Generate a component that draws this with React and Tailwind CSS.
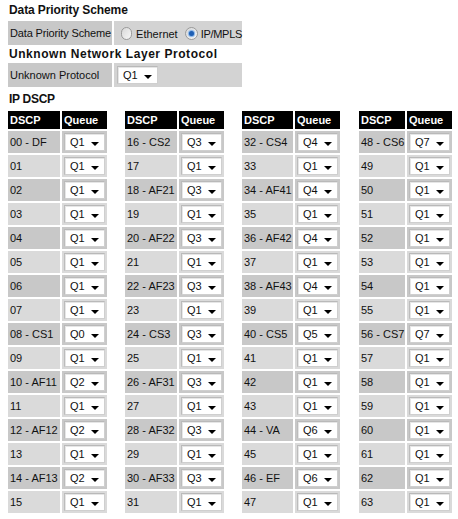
import React from 'react';

const tag = {
  0: 'DF', 8: 'CS1', 10: 'AF11', 12: 'AF12', 14: 'AF13',
  16: 'CS2', 18: 'AF21', 20: 'AF22', 22: 'AF23', 24: 'CS3', 26: 'AF31', 28: 'AF32', 30: 'AF33',
  32: 'CS4', 34: 'AF41', 36: 'AF42', 38: 'AF43', 40: 'CS5', 44: 'VA', 46: 'EF',
  48: 'CS6', 56: 'CS7',
};

const queue = {
  8: 'Q0', 10: 'Q2', 12: 'Q2', 14: 'Q2',
  16: 'Q3', 18: 'Q3', 20: 'Q3', 22: 'Q3', 24: 'Q3', 26: 'Q3', 28: 'Q3', 30: 'Q3',
  32: 'Q4', 34: 'Q4', 36: 'Q4', 38: 'Q4', 40: 'Q5', 44: 'Q6', 46: 'Q6',
  48: 'Q7', 56: 'Q7',
};

const label = (n) => {
  const s = String(n).padStart(2, '0');
  return tag[n] ? `${s} - ${tag[n]}` : s;
};

const groups = [
  { start: 0, dscpW: 'w-[52px]' },
  { start: 16, dscpW: 'w-[52px]' },
  { start: 32, dscpW: 'w-[51px]' },
  { start: 48, dscpW: 'w-[46px]' },
];

function Select({ value }) {
  return (
    <div className="flex items-center w-[41px] h-[18px] bg-white border border-[#cfcfcf] border-t-[#b9b9b9] border-l-[#bcbcbc] shadow-[inset_1px_1px_0_#e6e6e6]">
      <span className="pl-[5px] leading-none">{value}</span>
      <span className="ml-auto mr-[5px] mt-[3px] w-0 h-0 border-l-[4px] border-r-[4px] border-t-[4px] border-l-transparent border-r-transparent border-t-black" />
    </div>
  );
}

function Radio({ checked }) {
  return (
    <span className="relative inline-flex items-center justify-center w-[13px] h-[13px] rounded-full border border-[#9a9a9a] bg-gradient-to-br from-[#d8d8d8] to-[#f8f8f8]">
      {checked && (
        <span className="w-[5px] h-[5px] rounded-full bg-[#1e5fb4] shadow-[0_0_1px_1px_#7fb0e8]" />
      )}
    </span>
  );
}

function DscpTable({ start, dscpW }) {
  const rows = Array.from({ length: 16 }, (_, i) => start + i);
  return (
    <div className="flex flex-col gap-[2px]">
      <div className="flex gap-[2px] h-[18px] bg-white">
        <div className={`${dscpW} bg-black text-white font-bold pl-[2px] flex items-center`}>DSCP</div>
        <div className="w-[45px] bg-black text-white font-bold pl-[2px] flex items-center">Queue</div>
      </div>
      {rows.map((n, i) => {
        const bg = i % 2 === 0 ? 'bg-[#c8c8c8]' : 'bg-[#dadada]';
        return (
          <div key={n} className="flex gap-[2px] h-[22px]">
            <div className={`${dscpW} ${bg} pl-[2px] flex items-center whitespace-nowrap`}>{label(n)}</div>
            <div className={`w-[45px] ${bg} flex items-center justify-center`}>
              <Select value={queue[n] || 'Q1'} />
            </div>
          </div>
        );
      })}
    </div>
  );
}

export default function App() {
  return (
    <div className="w-[458px] h-[519px] bg-white text-[#111] text-[11px] font-['Liberation_Sans',Arial,sans-serif] pl-[8px] overflow-hidden">
      <div className="h-[20px] flex items-center pl-[1px] font-bold text-[12px] tracking-[-0.1px]">Data Priority Scheme</div>

      <div className="flex gap-[2px] mt-[1px] h-[24px]">
        <div className="w-[104px] bg-[#c8c8c8] pl-[2px] flex items-center whitespace-nowrap tracking-[-0.15px]">Data Priority Scheme</div>
        <div className="w-[128px] bg-[#d3d3d3] flex items-center pl-[7px]">
          <Radio />
          <span className="ml-[4px] mt-[2px]">Ethernet</span>
          <span className="ml-[7px] flex items-center">
            <Radio checked />
          </span>
          <span className="ml-[3px] mt-[2px] tracking-[-0.3px]">IP/MPLS</span>
        </div>
      </div>

      <div className="h-[18px] flex items-center pl-[1px] font-bold text-[12px] tracking-[0.55px]">Unknown Network Layer Protocol</div>

      <div className="flex gap-[2px] h-[24px]">
        <div className="w-[104px] bg-[#c8c8c8] pl-[2px] flex items-center">Unknown Protocol</div>
        <div className="w-[128px] bg-[#d3d3d3] flex items-center pl-[3px]">
          <Select value="Q1" />
        </div>
      </div>

      <div className="h-[24px] flex items-center pl-[1px] font-bold text-[12px] tracking-[-0.3px]">IP DSCP</div>

      <div className="grid grid-cols-[117px_117px_117px_93px]">
        {groups.map((g) => (
          <DscpTable key={g.start} {...g} />
        ))}
      </div>
    </div>
  );
}
